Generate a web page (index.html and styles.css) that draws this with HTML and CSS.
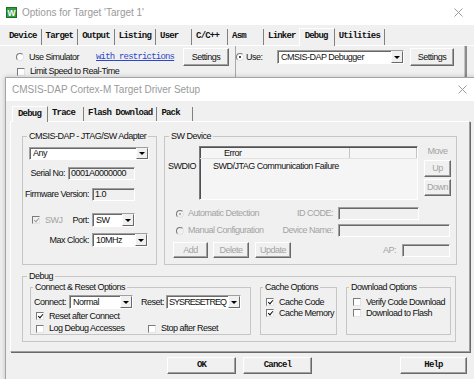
FILE: index.html
```html
<!DOCTYPE html>
<html lang="en">
<head>
    <meta charset="UTF-8">
    <meta name="viewport" content="width=device-width, initial-scale=1.0">
    <title>Options for Target 'Target 1'</title>
    <link rel="stylesheet" href="styles.css">
</head>
<body>
<div class="desktop">

    <!-- Options for Target window (behind) -->
    <div class="window back">
        <div class="titlebar">
            <svg class="app-icon" width="11" height="11" viewBox="0 0 11 11">
                <rect x="0.5" y="0.5" width="10" height="10" fill="#2f9e3f" stroke="#1d6e2a"/>
                <text x="5.5" y="8.8" text-anchor="middle" font-family="Liberation Sans" font-weight="bold" font-size="8.5" fill="#fff">W</text>
            </svg>
            <span class="title">Options for Target 'Target 1'</span>
            <svg class="close" width="9" height="9" viewBox="0 0 9 9">
                <path d="M0.5 0.5L8.5 8.5M8.5 0.5L0.5 8.5" stroke="#9a9a9a" stroke-width="1"/>
            </svg>
        </div>
        <div class="tabs back-tabs mono">
            <span class="tab">Device</span>
            <span class="tab">Target</span>
            <span class="tab">Output</span>
            <span class="tab">Listing</span>
            <span class="tab">User</span>
            <span class="tab">C/C++</span>
            <span class="tab">Asm</span>
            <span class="tab">Linker</span>
            <span class="tab on">Debug</span>
            <span class="tab">Utilities</span>
        </div>
        <div class="back-body">
            <div class="back-left">
                <div class="sim-row">
                    <span class="radio"></span>
                    <span>Use Simulator</span>
                    <span class="link mono">with restrictions</span>
                    <span class="btn">Settings</span>
                </div>
                <div class="limit-row">
                    <span class="check"></span>
                    <span>Limit Speed to Real-Time</span>
                </div>
            </div>
            <div class="back-right">
                <div class="use-row">
                    <span class="radio on"></span>
                    <span>Use:</span>
                    <span class="select"><span class="value">CMSIS-DAP Debugger</span><span class="drop"></span></span>
                    <span class="btn">Settings</span>
                </div>
            </div>
        </div>
    </div>

    <!-- CMSIS-DAP driver setup dialog (front) -->
    <div class="window front">
        <div class="titlebar">
            <span class="title">CMSIS-DAP Cortex-M Target Driver Setup</span>
            <svg class="close" width="9" height="9" viewBox="0 0 9 9">
                <path d="M0.5 0.5L8.5 8.5M8.5 0.5L0.5 8.5" stroke="#9a9a9a" stroke-width="1"/>
            </svg>
        </div>
        <div class="tabs front-tabs mono">
            <span class="tab on">Debug</span>
            <span class="tab">Trace</span>
            <span class="tab">Flash Download</span>
            <span class="tab">Pack</span>
        </div>

        <div class="panel">
            <div class="top-groups">
                <fieldset class="group adapter">
                    <legend>CMSIS-DAP - JTAG/SW Adapter</legend>
                    <div class="select any"><span class="value">Any</span><span class="drop"></span></div>
                    <div class="form-row serial">
                        <label>Serial No:</label>
                        <span class="field">0001A0000000</span>
                    </div>
                    <div class="form-row firmware">
                        <label>Firmware Version:</label>
                        <span class="field">1.0</span>
                    </div>
                    <div class="form-row port">
                        <span class="swj">
                            <span class="check on disabled"></span>
                            <span class="muted">SWJ</span>
                            <label>Port:</label>
                        </span>
                        <span class="select"><span class="value">SW</span><span class="drop"></span></span>
                    </div>
                    <div class="form-row clock">
                        <label>Max Clock:</label>
                        <span class="select"><span class="value">10MHz</span><span class="drop"></span></span>
                    </div>
                </fieldset>

                <fieldset class="group swdev">
                    <legend>SW Device</legend>
                    <div class="sw-top">
                        <span class="swdio">SWDIO</span>
                        <div class="list">
                            <div class="list-head">
                                <span class="col-error">Error</span>
                                <span class="col-rest"></span>
                            </div>
                            <div class="list-row">SWD/JTAG Communication Failure</div>
                        </div>
                        <div class="move">
                            <span class="muted">Move</span>
                            <span class="btn small up muted">Up</span>
                            <span class="btn small down muted">Down</span>
                        </div>
                    </div>
                    <div class="sw-mid">
                        <span class="opt muted"><span class="radio on disabled"></span>Automatic Detection</span>
                        <label class="muted">ID CODE:</label>
                        <span class="cell"><span class="field idcode"></span></span>
                        <span class="opt muted"><span class="radio disabled"></span>Manual Configuration</span>
                        <label class="muted">Device Name:</label>
                        <span class="cell"><span class="field devname"></span></span>
                    </div>
                    <div class="sw-bot">
                        <span class="btn muted add">Add</span>
                        <span class="btn muted del">Delete</span>
                        <span class="btn muted upd">Update</span>
                        <label class="muted ap">AP:</label>
                        <span class="field ap-field"></span>
                    </div>
                </fieldset>
            </div>

            <fieldset class="group debug">
                <legend>Debug</legend>
                <div class="debug-row">
                    <fieldset class="group connect">
                        <legend>Connect &amp; Reset Options</legend>
                        <div class="connect-row">
                            <label>Connect:</label>
                            <span class="select"><span class="value">Normal</span><span class="drop"></span></span>
                            <label class="reset-lbl">Reset:</label>
                            <span class="select narrow"><span class="value tight">SYSRESETREQ</span><span class="drop"></span></span>
                        </div>
                        <div class="opt-row first"><span class="check on"></span>Reset after Connect</div>
                        <div class="opt-row two">
                            <span class="opt"><span class="check"></span>Log Debug Accesses</span>
                            <span class="opt"><span class="check"></span>Stop after Reset</span>
                        </div>
                    </fieldset>
                    <fieldset class="group cache">
                        <legend>Cache Options</legend>
                        <div class="opt-row top"><span class="check on"></span>Cache Code</div>
                        <div class="opt-row next"><span class="check on"></span>Cache Memory</div>
                    </fieldset>
                    <fieldset class="group download">
                        <legend>Download Options</legend>
                        <div class="opt-row top"><span class="check"></span>Verify Code Download</div>
                        <div class="opt-row next"><span class="check"></span>Download to Flash</div>
                    </fieldset>
                </div>
            </fieldset>
        </div>

        <div class="dlg-buttons mono">
            <span class="btn big">OK</span>
            <span class="btn big cancel">Cancel</span>
            <span class="btn big help">Help</span>
        </div>
    </div>

</div>
</body>
</html>
```

FILE: styles.css
```css
* {
    box-sizing: border-box;
}
body {
    margin: 0;
    font-family: "Liberation Sans", Arial, sans-serif;
    font-size: 9px;
    line-height: 11px;
    letter-spacing: -0.5px;
    color: #111;
}
.desktop {
    position: relative;
    width: 474px;
    height: 379px;
    overflow: hidden;
    background: #f0f0f0;
}
.window {
    position: absolute;
    background: #f0f0f0;
}
.back {
    left: 0;
    top: 0;
    width: 474px;
    height: 379px;
}
.front {
    left: 5px;
    top: 77px;
    width: 472px;
    height: 312px;
    border: 1px solid #a4a4a4;
    box-shadow: 0 0 5px rgba(0, 0, 0, 0.2);
}
.mono {
    font-family: "Liberation Mono", "Courier New", monospace;
    font-weight: bold;
    font-size: 9px;
    letter-spacing: -0.8px;
}
.muted {
    color: #a3a3a3;
}

/* title bars */
.titlebar {
    display: flex;
    align-items: center;
    background: #fff;
    color: #9a9a9a;
    font-size: 10px;
    letter-spacing: 0;
}
.back .titlebar {
    height: 25px;
    padding: 0 11px 0 6px;
}
.front .titlebar {
    height: 23px;
    padding: 0 9px 0 6px;
}
.app-icon {
    margin-right: 5px;
}
.close {
    margin-left: auto;
}

/* tab strips */
.tabs {
    display: flex;
    align-items: flex-end;
}
.tab {
    min-width: 36px;
    padding: 0 4px;
    border-right: 1px solid #808080;
    white-space: nowrap;
}
.tab.on {
    position: relative;
    z-index: 1;
    bottom: -1px;
    margin-left: -2px;
    padding-left: 5px;
    border-top: 1px solid #fff;
    border-left: 1px solid #fff;
    background: #f0f0f0;
}
.back-tabs {
    margin-top: 3px;
    height: 17px;
    padding-left: 5px;
}
.back-tabs .tab {
    height: 16px;
    line-height: 15px;
}
.back-tabs .tab.on {
    height: 18px;
}
.front-tabs {
    margin-top: 4px;
    height: 16px;
    padding-left: 8px;
}
.front-tabs .tab {
    height: 14px;
    line-height: 13px;
}
.front-tabs .tab.on {
    height: 16px;
    line-height: 15px;
}

/* controls */
.btn {
    display: flex;
    align-items: center;
    justify-content: center;
    height: 18px;
    background: #f0f0f0;
    border: 1px solid;
    border-color: #fff #696969 #696969 #fff;
    box-shadow: inset -1px -1px 0 #a0a0a0;
    white-space: nowrap;
}
.field {
    display: flex;
    align-items: center;
    height: 13px;
    padding-left: 2px;
    background: #f0f0f0;
    border: 1px solid;
    border-color: #a0a0a0 #fff #fff #a0a0a0;
    box-shadow: inset 1px 1px 0 #696969;
    white-space: nowrap;
    overflow: hidden;
}
.select {
    display: flex;
    align-items: center;
    height: 14px;
    padding-left: 3px;
    background: #fff;
    border: 1px solid;
    border-color: #a0a0a0 #fff #fff #a0a0a0;
    box-shadow: inset 1px 1px 0 #696969;
}
.select.narrow {
    padding-left: 2px;
}
.select .value {
    flex: 1;
    white-space: nowrap;
    overflow: hidden;
}
.select .tight {
    letter-spacing: -0.95px;
}
.drop {
    display: flex;
    align-items: center;
    justify-content: center;
    flex: none;
    width: 12px;
    height: 100%;
    background: #f0f0f0;
    border: 1px solid;
    border-color: #f0f0f0 #696969 #696969 #fff;
}
.drop::after {
    content: "";
    border-style: solid;
    border-width: 3px 3px 0;
    border-color: #000 transparent transparent;
}
.radio {
    display: flex;
    align-items: center;
    justify-content: center;
    flex: none;
    width: 8px;
    height: 8px;
    border-radius: 50%;
    background: #fff;
    border: 1px solid;
    border-color: #7a7a7a #e4e4e4 #e4e4e4 #7a7a7a;
}
.radio.on::after {
    content: "";
    width: 2px;
    height: 2px;
    border-radius: 50%;
    background: #111;
}
.radio.disabled {
    background: #f0f0f0;
}
.radio.disabled::after {
    background: #a0a0a0;
}
.check {
    display: flex;
    align-items: center;
    justify-content: center;
    flex: none;
    width: 8px;
    height: 8px;
    background: #fff;
    border: 1px solid;
    border-color: #7a7a7a #e4e4e4 #e4e4e4 #7a7a7a;
}
.check.on::after {
    content: "";
    width: 4px;
    height: 2px;
    margin-top: -2px;
    border-left: 1.5px solid #111;
    border-bottom: 1.5px solid #111;
    transform: rotate(-50deg);
}
.check.disabled {
    background: #f0f0f0;
}
.check.disabled::after {
    border-color: #a0a0a0;
}

/* back window body */
.back-body {
    display: flex;
    border-top: 1px solid #fff;
}
.back-left {
    width: 236px;
    height: 40px;
    border-right: 1px solid #a8a8a8;
}
.back-right {
    width: 229px;
    height: 40px;
    border-right: 1px solid #c4c4c4;
    box-shadow: 2px 0 0 #8c8c8c;
}
.sim-row {
    display: grid;
    grid-template-columns: 13px 67px 87px 46px;
    align-items: center;
    height: 18px;
    margin-top: 2px;
    padding-left: 16px;
}
.link {
    color: #2f46c8;
    font-weight: normal;
    text-decoration: underline;
}
.limit-row {
    display: flex;
    align-items: center;
    gap: 5px;
    height: 11px;
    padding-left: 17px;
}
.use-row {
    display: grid;
    grid-template-columns: 8px 33px 127px 50px;
    align-items: center;
    height: 18px;
    margin-top: 2px;
}
.use-row > span:nth-child(2) {
    padding-left: 2px;
}
.use-row .btn {
    width: 44px;
    justify-self: end;
}

/* front panel */
.panel {
    width: 460px;
    height: 231px;
    margin-left: 4px;
    padding: 9px 0 0 11px;
    border: 1px solid;
    border-color: #fff #a0a0a0 #a0a0a0 #fff;
    box-shadow: 1px 1px 0 #696969;
}
.group {
    flex: none;
    min-width: 0;
    margin: 0;
    padding: 0;
    border: 1px solid #c6c6c6;
}
legend {
    margin-left: 4px;
    padding: 0 2px;
    line-height: 11px;
}
.top-groups {
    display: flex;
}
.adapter {
    width: 135px;
    height: 134px;
}
.swdev {
    width: 293px;
    height: 134px;
    margin-left: 7px;
}
.any {
    width: 120px;
    height: 13px;
    margin: 5px 0 0 6px;
}
.form-row {
    display: grid;
    align-items: center;
    column-gap: 3px;
    height: 13px;
}
.form-row label {
    text-align: right;
    white-space: nowrap;
}
.serial {
    grid-template-columns: 42px 67px;
    margin-top: 7px;
}
.firmware {
    grid-template-columns: 66px 43px;
    margin-top: 8px;
}
.port {
    grid-template-columns: 66px 43px;
    height: 14px;
    margin-top: 12px;
}
.clock {
    grid-template-columns: 66px 56px;
    height: 14px;
    margin-top: 6px;
}
.swj {
    display: flex;
    align-items: center;
    padding-left: 9px;
}
.swj .muted {
    margin-left: 5px;
}
.swj label {
    margin-left: auto;
}

/* SW device */
.sw-top {
    display: flex;
    margin-top: 4px;
}
.swdio {
    width: 34px;
    padding: 15px 0 0 3px;
}
.list {
    width: 219px;
    height: 54px;
    background: #f5f5f5;
    border: 1px solid;
    border-color: #7a7a7a #fff #fff #7a7a7a;
    box-shadow: inset 1px 1px 0 #505050;
}
.list-head {
    display: flex;
    height: 11px;
    margin-top: 1px;
    border-bottom: 1px solid #e2e2e2;
}
.col-error {
    width: 150px;
    padding-left: 24px;
    border-right: 1px solid #c4c4c4;
}
.col-rest {
    width: 67px;
    border-right: 1px solid #c4c4c4;
}
.list-row {
    margin-top: 2px;
    padding-left: 13px;
}
.move {
    display: flex;
    flex-direction: column;
    align-items: center;
    width: 27px;
    margin-left: 6px;
}
.small {
    width: 27px;
    height: 17px;
}
.up {
    margin-top: 3px;
}
.down {
    margin-top: 2px;
}
.sw-mid {
    display: grid;
    grid-template-columns: 117px 51px 117px;
    grid-template-rows: 13px 13px;
    row-gap: 4px;
    align-items: center;
    margin-top: 7px;
}
.sw-mid label {
    text-align: right;
    white-space: nowrap;
}
.opt {
    display: flex;
    align-items: center;
    gap: 4px;
    white-space: nowrap;
}
.sw-mid .opt {
    padding-left: 11px;
}
.cell {
    padding-left: 5px;
}
.idcode {
    width: 81px;
}
.devname {
    width: 112px;
}
.sw-bot {
    display: flex;
    align-items: center;
    height: 16px;
    margin-top: 5px;
    padding-right: 6px;
}
.sw-bot .btn {
    height: 16px;
}
.add {
    width: 35px;
    margin-left: 8px;
}
.del {
    width: 36px;
    margin-left: 5px;
}
.upd {
    width: 36px;
    margin-left: 6px;
}
.ap {
    margin-left: auto;
}
.ap-field {
    width: 48px;
    margin-left: 6px;
}

/* debug group */
.debug {
    width: 434px;
    height: 71px;
    margin-top: 6px;
}
.debug-row {
    display: flex;
}
.debug-row legend {
    margin-left: 2px;
}
.connect {
    width: 221px;
    height: 53px;
    margin-left: 7px;
}
.cache {
    width: 77px;
    height: 53px;
    margin-left: 9px;
}
.download {
    width: 105px;
    height: 53px;
    margin-left: 9px;
}
.connect-row {
    display: grid;
    grid-template-columns: 35px 64px 33px 75px;
    align-items: center;
    height: 14px;
    margin-top: 2px;
    padding-left: 3px;
}
.reset-lbl {
    padding-left: 8px;
}
.opt-row {
    display: flex;
    align-items: center;
    gap: 5px;
    height: 10px;
    padding-left: 5px;
    white-space: nowrap;
}
.opt-row.first,
.opt-row.two {
    margin-top: 2px;
}
.opt-row.two {
    display: grid;
    grid-template-columns: 107px auto;
}
.opt-row .opt {
    gap: 5px;
}
.opt-row.top {
    margin-top: 4px;
}
.opt-row.next {
    margin-top: 1px;
}
.download .opt-row {
    padding-left: 6px;
}

/* dialog buttons */
.dlg-buttons {
    display: flex;
    height: 17px;
    margin-top: 5px;
    padding-left: 161px;
}
.big {
    width: 69px;
    height: 17px;
}
.cancel {
    margin-left: 7px;
}
.help {
    width: 67px;
    margin-left: 88px;
}
```
